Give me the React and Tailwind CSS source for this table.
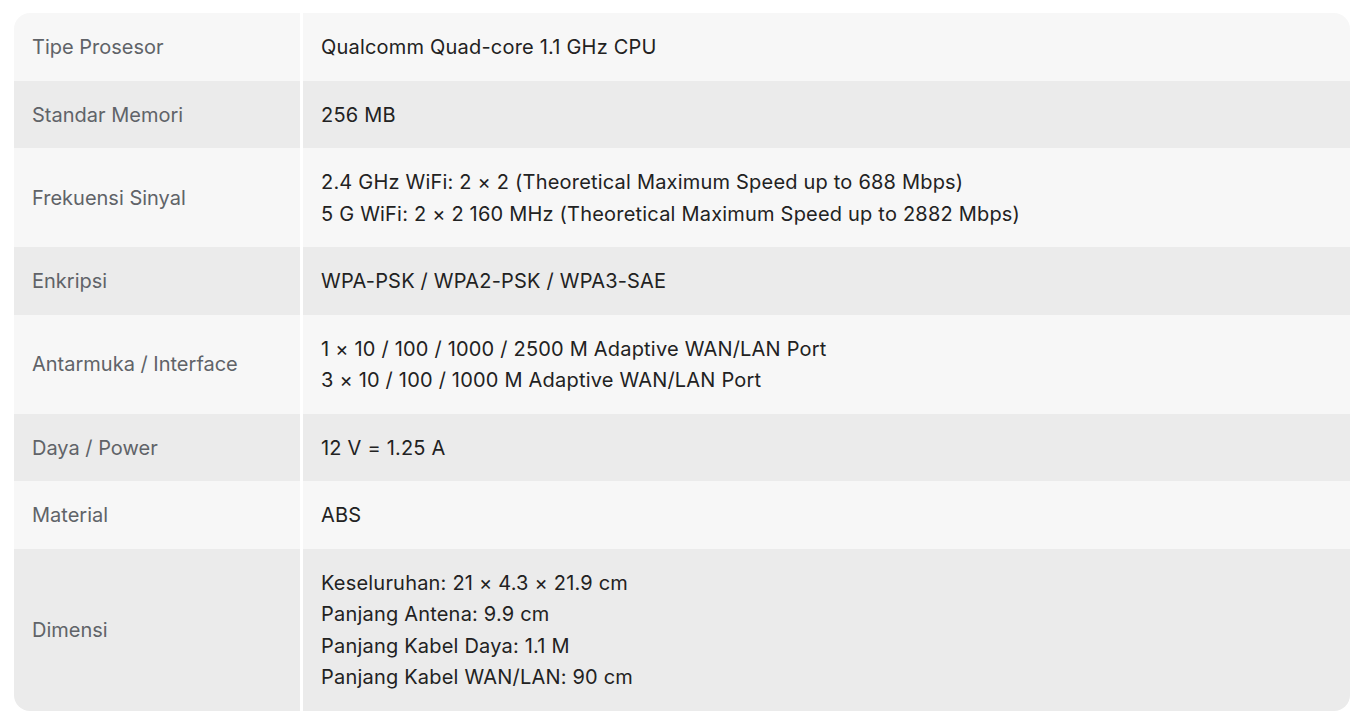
const SPECS = [
  { label: 'Tipe Prosesor', lines: ['Qualcomm Quad-core 1.1 GHz CPU'] },
  { label: 'Standar Memori', lines: ['256 MB'] },
  {
    label: 'Frekuensi Sinyal',
    lines: [
      '2.4 GHz WiFi: 2 × 2 (Theoretical Maximum Speed up to 688 Mbps)',
      '5 G WiFi: 2 × 2 160 MHz (Theoretical Maximum Speed up to 2882 Mbps)',
    ],
  },
  { label: 'Enkripsi', lines: ['WPA-PSK / WPA2-PSK / WPA3-SAE'] },
  {
    label: 'Antarmuka / Interface',
    lines: ['1 × 10 / 100 / 1000 / 2500 M Adaptive WAN/LAN Port', '3 × 10 / 100 / 1000 M Adaptive WAN/LAN Port'],
  },
  { label: 'Daya / Power', lines: ['12 V = 1.25 A'] },
  { label: 'Material', lines: ['ABS'] },
  {
    label: 'Dimensi',
    lines: [
      'Keseluruhan: 21 × 4.3 × 21.9 cm',
      'Panjang Antena: 9.9 cm',
      'Panjang Kabel Daya: 1.1 M',
      'Panjang Kabel WAN/LAN: 90 cm',
    ],
  },
];

export default function App() {
  return (
    <div className="min-h-screen bg-white pt-[13px] px-[14px]" style={{ fontFamily: 'Inter, "Noto Sans", sans-serif' }}>
      <div className="w-[1336px] rounded-2xl overflow-hidden">
        {SPECS.map((s, i) => (
          <div key={s.label} className={`flex ${i % 2 === 0 ? 'bg-[#f7f7f7]' : 'bg-[#ebebeb]'}`}>
            {/* label */}
            <div className="w-[286px] flex-shrink-0 flex items-center px-[18px] pt-[19px] pb-[17px] text-[20px] leading-[31.5px] text-[#606368]">
              {s.label}
            </div>
            {/* value */}
            <div className="flex-1 border-l-[3px] border-white px-[18px] pt-[19px] pb-[17px] text-[20px] leading-[31.5px] tracking-[0.2px] text-[#222222]">
              {s.lines.map((l) => (
                <div key={l}>{l}</div>
              ))}
            </div>
          </div>
        ))}
      </div>
    </div>
  );
}
